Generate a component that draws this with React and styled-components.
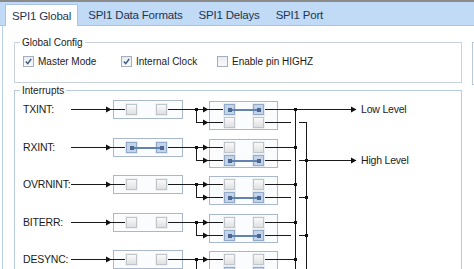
import React from "react";
import styled, { createGlobalStyle } from "styled-components";

const GlobalStyle = createGlobalStyle`
  html, body {
    margin: 0;
    padding: 0;
    background: #ffffff;
    overflow: hidden;
  }
  body {
    font-family: "Liberation Sans", Arial, sans-serif;
    color: #1b1b1b;
  }
`;

const tabs = ["SPI1 Global", "SPI1 Data Formats", "SPI1 Delays", "SPI1 Port"];

const checks = [
  { label: "Master Mode", checked: true, width: 98 },
  { label: "Internal Clock", checked: true, width: 96 },
  { label: "Enable pin HIGHZ", checked: false, width: 120 },
];

// row line positions inside the diagram svg
const rows = [
  { name: "TXINT:", y: 10, mux1: false, mux2: "upper" },
  { name: "RXINT:", y: 48, mux1: true, mux2: "lower" },
  { name: "OVRNINT:", y: 85, mux1: false, mux2: "lower" },
  { name: "BITERR:", y: 123, mux1: false, mux2: "lower" },
  { name: "DESYNC:", y: 160, mux1: false, mux2: "lower" },
];

const BUS1 = 224;
const BUS2 = 235;
const OUT_END = 285;

const Window = styled.div`
  width: 474px;
  height: 269px;
  display: flex;
  flex-direction: column;
  overflow: hidden;
  background: #ffffff;
`;

const TitleEdge = styled.div`
  height: 2px;
  flex-shrink: 0;
  background: #8b8b8b;
`;

const TabStrip = styled.div`
  height: 23px;
  flex-shrink: 0;
  display: flex;
  align-items: flex-end;
  padding-left: 5px;
  background: #c1daf6;
  border-bottom: 1px solid #a7c3ea;
`;

const Tab = styled.div`
  height: ${(p) => (p.$active ? 21 : 22)}px;
  line-height: ${(p) => (p.$active ? 22 : 23)}px;
  margin-bottom: -1px;
  padding: ${(p) => (p.$active ? "0 6px" : "0 8px")};
  margin-left: ${(p) => (p.$first ? "2px" : "0")};
  background: ${(p) => (p.$active ? "#ffffff" : "transparent")};
  border: ${(p) => (p.$active ? "1px solid #a9c4e8" : "none")};
  border-bottom: none;
  font-size: 11.5px;
  letter-spacing: -0.2px;
  color: #1d3553;
  white-space: nowrap;
`;

const Page = styled.div`
  flex: 1;
  min-height: 0;
  display: flex;
  gap: 10px;
  margin-left: 2px;
  padding: 10px 0 0 11px;
  border-left: 1px solid #b9cfee;
  overflow: hidden;
`;

const MainCol = styled.div`
  width: 448px;
  flex-shrink: 0;
  display: flex;
  flex-direction: column;
`;

const SideBox = styled.div`
  width: 30px;
  height: 41px;
  margin-top: 6px;
  flex-shrink: 0;
  border: 1px solid #b8c8de;
`;

const GroupBox = styled.fieldset`
  margin: ${(p) => (p.$gap ? "1px 0 0" : "0")};
  padding: ${(p) => p.$pad};
  min-width: 0;
  border: 1px solid ${(p) => p.$line};
`;

const Legend = styled.legend`
  margin-left: -3px;
  padding: 0 2px;
  font-size: 10px;
  line-height: 13px;
  color: #1b1b1b;
`;

const CheckRow = styled.div`
  display: flex;
  align-items: center;
  height: 13px;
`;

const CheckItem = styled.label`
  width: ${(p) => p.$w}px;
  display: flex;
  align-items: center;
  gap: 4px;
  font-size: 10px;
  white-space: nowrap;
`;

const Box = styled.span`
  width: 9px;
  height: 9px;
  flex-shrink: 0;
  display: flex;
  align-items: center;
  justify-content: center;
  border: 1px solid #a5afbb;
  background: linear-gradient(#e9ecef, #f9fafb);
`;

const Wiring = styled.div`
  display: flex;
  align-items: flex-start;
`;

const LabelCol = styled.div`
  width: 48px;
  flex-shrink: 0;
  display: flex;
  flex-direction: column;
`;

const RowLabel = styled.div`
  height: 37.5px;
  line-height: 20px;
  font-size: 10.5px;
  letter-spacing: -0.2px;
  white-space: nowrap;
`;

const OutCol = styled.div`
  margin-left: 4px;
  display: flex;
  flex-direction: column;
`;

const OutLabel = styled.div`
  height: 20px;
  line-height: 20px;
  margin-top: ${(p) => p.$top || 0}px;
  font-size: 10.5px;
  letter-spacing: -0.2px;
  white-space: nowrap;
`;

const Diagram = styled.svg`
  display: block;
  flex-shrink: 0;
  shape-rendering: crispEdges;
`;

function Check({ checked }) {
  return (
    <Box>
      {checked && (
        <svg width="7" height="7" viewBox="0 0 7 7">
          <path d="M0.8 3.6 L2.7 5.6 L6.2 1" fill="none" stroke="#3c5a86" strokeWidth="1.4" shapeRendering="geometricPrecision" />
        </svg>
      )}
    </Box>
  );
}

function Arrow({ x, y }) {
  return <polygon points={`${x - 5},${y - 2.5} ${x + 0.5},${y + 0.5} ${x - 5},${y + 3.5}`} fill="#111" shapeRendering="geometricPrecision" />;
}

function Dot({ x, y }) {
  return <rect x={x - 1} y={y - 1} width="3" height="3" fill="#111" />;
}

function Pad({ x, y, on }) {
  if (on) {
    return (
      <g>
        <rect x={x - 1} y={y - 1} width="13" height="13" fill="#e4ebf5" />
        <rect x={x + 0.5} y={y + 0.5} width="10" height="10" fill="#c3d3e8" stroke="#93a9c8" />
      </g>
    );
  }
  return (
    <g>
      <rect x={x - 1} y={y - 1} width="13" height="13" fill="#eef0f2" />
      <rect x={x + 0.5} y={y + 0.5} width="10" height="10" fill="url(#padFill)" stroke="#c0c5cb" />
    </g>
  );
}

function Link({ x1, x2, y }) {
  return (
    <g>
      <line x1={x1} y1={y + 0.5} x2={x2} y2={y + 0.5} stroke="#6282b0" strokeWidth="2" />
      <rect x={x1 - 2} y={y - 1.5} width="4" height="4" fill="#4a6893" />
      <rect x={x2 - 2} y={y - 1.5} width="4" height="4" fill="#4a6893" />
    </g>
  );
}

function Wire({ d }) {
  return <path d={d} fill="none" stroke="#1a1a1a" strokeWidth="1" />;
}

function InterruptRow({ row, index }) {
  const upper = row.mux2 === "upper";
  return (
    <g transform={`translate(0, ${row.y})`}>
      <rect x="42.5" y="-8.5" width="69" height="18" fill="#fbfcfe" stroke="#a9b8cd" />
      <rect x="138.5" y="-7.5" width="68" height="28" fill="#fbfcfe" stroke="#a9b8cd" />

      <Wire d="M0 0.5 H55" />
      <Arrow x={40} y={0} />
      <Wire d="M96 0.5 H153" />
      <Wire d="M125.5 0.5 V13.5 H153" />
      <Arrow x={137} y={0} />
      <Arrow x={137} y={13} />
      <Dot x={125} y={0} />

      <Wire d={`M193 0.5 H${BUS1}`} />
      {index === 0 ? (
        <Wire d={`M193 13.5 H${BUS1 - 4} M${BUS1 + 4} 13.5 H${BUS2 + 0.5} V20`} />
      ) : (
        <Wire d={`M193 13.5 H${BUS1 - 4} M${BUS1 + 4} 13.5 H${BUS2}`} />
      )}
      <Dot x={BUS1} y={0} />
      {index > 0 && <Dot x={BUS2} y={13} />}

      <Pad x={55} y={-5} on={row.mux1} />
      <Pad x={85} y={-5} on={row.mux1} />
      {row.mux1 && <Link x1={60.5} x2={90.5} y={0} />}

      <Pad x={153} y={-5} on={upper} />
      <Pad x={182} y={-5} on={upper} />
      <Pad x={153} y={8} on={!upper} />
      <Pad x={182} y={8} on={!upper} />
      <Link x1={158.5} x2={187.5} y={upper ? 0 : 13} />
    </g>
  );
}

function InterruptDiagram() {
  return (
    <Diagram width="286" height="175" viewBox="0 0 286 175">
      <defs>
        <linearGradient id="padFill" x1="0" y1="0" x2="0" y2="1">
          <stop offset="0" stopColor="#fbfbfb" />
          <stop offset="1" stopColor="#dedfe1" />
        </linearGradient>
      </defs>
      <Wire d={`M${BUS1 + 0.5} 10 V175`} />
      <Wire d={`M${BUS2 + 0.5} 23 V175`} />
      <Wire d={`M${BUS1} 10.5 H${OUT_END}`} />
      <Wire d={`M${BUS2} 61.5 H${OUT_END}`} />
      <Arrow x={OUT_END} y={10} />
      <Arrow x={OUT_END} y={61} />
      {rows.map((row, i) => (
        <InterruptRow key={row.name} row={row} index={i} />
      ))}
    </Diagram>
  );
}

export default function App() {
  return (
    <Window>
      <GlobalStyle />
      <TitleEdge />
      <TabStrip>
        {tabs.map((t, i) => (
          <Tab key={t} $active={i === 0} $first={i === 1}>
            {t}
          </Tab>
        ))}
      </TabStrip>
      <Page>
        <MainCol>
          <GroupBox $pad="6px 8px 14px" $line="#cad2da">
            <Legend>Global Config</Legend>
            <CheckRow>
              {checks.map((c) => (
                <CheckItem key={c.label} $w={c.width}>
                  <Check checked={c.checked} />
                  {c.label}
                </CheckItem>
              ))}
            </CheckRow>
          </GroupBox>
          <GroupBox $gap $pad="2px 8px 0" $line="#b8c9e3">
            <Legend>Interrupts</Legend>
            <Wiring>
              <LabelCol>
                {rows.map((r) => (
                  <RowLabel key={r.name}>{r.name}</RowLabel>
                ))}
              </LabelCol>
              <InterruptDiagram />
              <OutCol>
                <OutLabel>Low Level</OutLabel>
                <OutLabel $top={31}>High Level</OutLabel>
              </OutCol>
            </Wiring>
          </GroupBox>
        </MainCol>
        <SideBox />
      </Page>
    </Window>
  );
}
